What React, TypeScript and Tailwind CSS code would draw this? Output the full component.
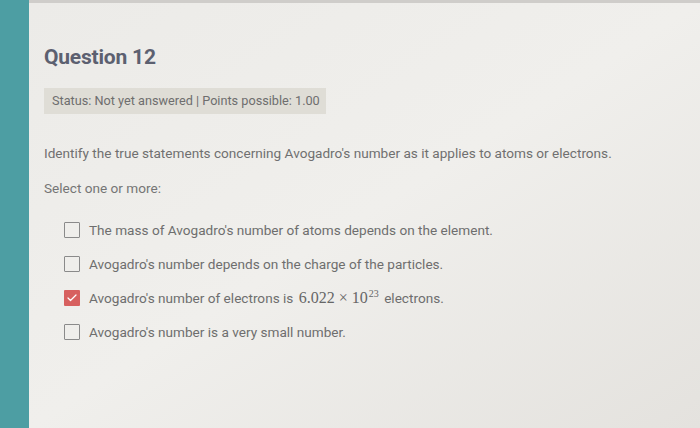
import { Check } from 'lucide-react'

const options = [
  { id: 'a', checked: false, text: <>The mass of Avogadro's number of atoms depends on the element.</> },
  { id: 'b', checked: false, text: <>Avogadro's number depends on the charge of the particles.</> },
  {
    id: 'c',
    checked: true,
    text: (
      <>
        Avogadro's number of electrons is{' '}
        <span className="font-['Liberation_Serif',serif] text-[16px] text-[#666666] mx-[2px]">
          6.022 × 10<span className="text-[10px] relative -top-[6px] ml-[1px]">23</span>
        </span>{' '}
        electrons.
      </>
    ),
  },
  { id: 'd', checked: false, text: <>Avogadro's number is a very small number.</> },
]

export default function App() {
  return (
    <div className="w-[700px] h-[428px] flex bg-[#e9e8e5] font-['Roboto',sans-serif] overflow-hidden">
      <div className="w-[29px] h-full bg-[#4d9ea3] shrink-0" />
      <div className="flex-1 flex flex-col border-t-[3px] border-[#cfcdca] bg-gradient-to-br from-[#ecebe8] via-[#f0efec] to-[#e4e2de] pl-[15px]">
        <h1 className="mt-[42px] text-[21px] leading-[24px] font-bold text-[#5c6070] tracking-[-0.2px]">Question 12</h1>
        <div className="mt-[19px] w-[282px] h-[26px] flex items-center px-[8px] bg-[#dfddd6] text-[12.7px] text-[#6e6e6e] whitespace-nowrap">
          Status: Not yet answered | Points possible: 1.00
        </div>
        <p className="mt-[30px] text-[13.6px] leading-[18px] text-[#707070]">
          Identify the true statements concerning Avogadro's number as it applies to atoms or electrons.
        </p>
        <p className="mt-[17px] text-[13.6px] leading-[18px] text-[#757575]">Select one or more:</p>
        <div className="mt-[24px] flex flex-col gap-[16px] pl-[20px]">
          {options.map((o) => (
            <label key={o.id} className="flex items-center gap-[9px] h-[18px] text-[13.6px] text-[#6e6e6e]">
              {o.checked ? (
                <span className="w-[16px] h-[16px] flex items-center justify-center bg-[#d7605f] rounded-[1px] shrink-0">
                  <Check size={12} strokeWidth={2.5} className="text-white" />
                </span>
              ) : (
                <span className="w-[16px] h-[16px] border-[1.5px] border-[#8a8a8a] rounded-[1px] bg-[#efeeeb] shrink-0" />
              )}
              <span>{o.text}</span>
            </label>
          ))}
        </div>
      </div>
    </div>
  )
}
